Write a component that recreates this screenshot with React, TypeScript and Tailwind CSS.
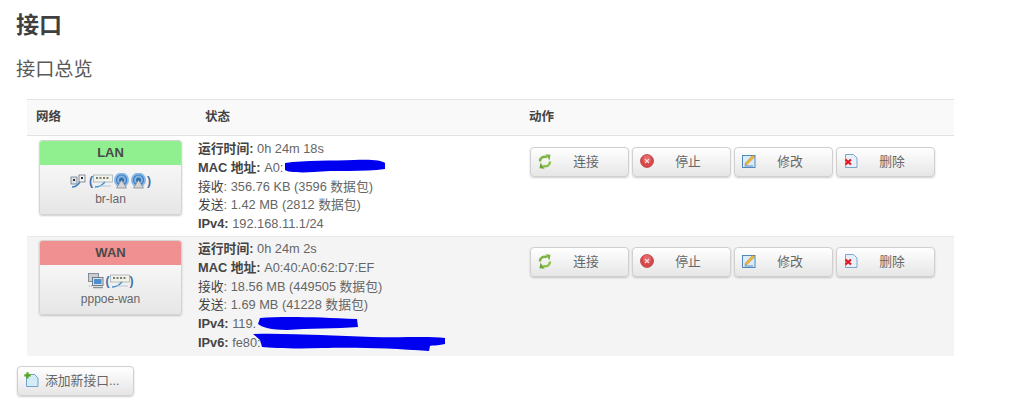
import React from 'react';

const font = { fontFamily: '"Liberation Sans", "Noto Sans CJK SC", sans-serif' };

const RefreshIcon = () => (
  <svg width="14" height="15" viewBox="0 0 14 15">
    <path d="M2 7.500C1.800 4 5 1.800 8.800 3.200" fill="none" stroke="#7cb342" strokeWidth="2.400" />
    <path d="M7.500 .3L12.500 .8L11.500 6.500Z" fill="#7cb342" />
    <path d="M12 7.500C12.200 11 9 13.200 5.200 11.800" fill="none" stroke="#8bc34a" strokeWidth="2.400" />
    <path d="M6.500 14.700L1.500 14.200L2.500 8.500Z" fill="#6aa536" />
  </svg>
);

const StopIcon = () => (
  <svg width="14" height="14" viewBox="0 0 14 14">
    <circle cx="7" cy="7" r="6.500" fill="#d8474a" stroke="#b23a3a" strokeWidth="0.7" />
    <circle cx="7" cy="5" r="4" fill="#ef8a88" opacity="0.5" />
    <path d="M5 5L9 9M9 5L5 9" stroke="#fbdede" strokeWidth="1.100" />
  </svg>
);

const EditIcon = () => (
  <svg width="14" height="14" viewBox="0 0 14 14">
    <rect x="0.500" y="1.500" width="12.500" height="12" fill="#dcebf8" stroke="#4f86bb" />
    <path d="M3 11L3.500 9L10.500 1.500L12.500 3L5 10.500Z" fill="#f0b93a" stroke="#a8761a" strokeWidth="0.5" />
    <path d="M2.500 12H11" stroke="#3d6fa5" strokeWidth="0.8" />
  </svg>
);

const DeleteIcon = () => (
  <svg width="14" height="14" viewBox="0 0 14 14">
    <path d="M1.500 .5H9.500L13 4V13.500H1.500Z" fill="#e6f0fa" stroke="#7fa5ca" />
    <path d="M1.500 5.500L7 10.500M7 5.500L1.500 10.500" stroke="#e0161c" strokeWidth="2.200" />
  </svg>
);

const AddIcon = () => (
  <svg width="15" height="15" viewBox="0 0 15 15">
    <path d="M2.500 2.500H10.500L14 6V14.500H2.500Z" fill="#d5ebf8" stroke="#6fa3c9" />
    <path d="M3.500 .2V6.500M.3 3.300H6.700" stroke="#56a821" strokeWidth="2.200" />
  </svg>
);

const SwitchIcon = () => (
  <svg width="16" height="14" viewBox="0 0 16 14">
    <rect x="1" y="3" width="6" height="7" fill="#dfe3e8" stroke="#59677a" strokeWidth="0.7" />
    <rect x="9" y="1" width="6" height="7" fill="#eef0f2" stroke="#59677a" strokeWidth="0.7" />
    <rect x="3" y="5" width="2" height="2" fill="#333" />
    <rect x="11" y="3" width="2" height="2" fill="#333" />
    <path d="M2 13C6 13 8 11 10 8" fill="none" stroke="#3f7fc0" strokeWidth="1.400" />
  </svg>
);

const EthernetIcon = () => (
  <svg width="20" height="14" viewBox="0 0 20 14">
    <rect x="0.500" y="1" width="19" height="7" fill="#f2f3e6" stroke="#8a9aa8" strokeWidth="0.6" />
    <path d="M3 4H5M6.500 4H8.500M10 4H12M13.500 4H15.500" stroke="#54575a" strokeWidth="1.600" />
    <path d="M2 13C7 13 9 11 12 8" fill="none" stroke="#3f8fd0" strokeWidth="1.300" />
    <path d="M6 12H18" stroke="#b6c8d8" strokeWidth="1" />
  </svg>
);

const WifiIcon = () => (
  <svg width="17" height="16" viewBox="0 0 17 16">
    <circle cx="8.500" cy="7" r="7.500" fill="#86b6e4" />
    <circle cx="8.500" cy="7" r="5" fill="none" stroke="#3f7fbf" strokeWidth="1.200" />
    <circle cx="8.500" cy="7" r="2.500" fill="#2f6fae" />
    <path d="M8.500 7L3.500 15H13.500Z" fill="#d4d6d8" stroke="#7b8085" strokeWidth="0.7" />
  </svg>
);

const ComputersIcon = () => (
  <svg width="16" height="16" viewBox="0 0 16 16">
    <rect x="0.500" y="0.500" width="10" height="8" fill="#c9ced3" stroke="#6f7a85" strokeWidth="0.8" />
    <rect x="4.500" y="4.500" width="10.500" height="8" fill="#dbe3ea" stroke="#56616d" strokeWidth="0.8" />
    <rect x="6" y="6" width="7.500" height="5" fill="#4a90d0" />
    <path d="M5 14.500H15" stroke="#8a939c" strokeWidth="1.500" />
    <path d="M1 13H4" stroke="#7fa5ca" strokeWidth="1" strokeDasharray="1 1" />
  </svg>
);

const Paren = ({ children }: { children: React.ReactNode }) => (
  <span className="text-[12px] font-bold leading-none text-[#3e6ea5]">{children}</span>
);

const NetBadge = ({ title, color, name, icons }: { title: string; color: string; name: string; icons: React.ReactNode }) => (
  <div className="w-[143px] h-[75px] rounded-[3px] border border-[#d4d4d4] overflow-hidden shadow-[0_1px_2px_rgba(0,0,0,0.2)] bg-gradient-to-b from-white to-[#e6e6e6]">
    <div className={`h-[24px] flex items-center justify-center text-[13px] font-bold text-[#4a4a4a] ${color}`}>{title}</div>
    <div className="flex flex-col items-center pt-[8px]">
      <div className="h-[16px] flex items-center">{icons}</div>
      <div className="text-[12px] leading-[18px] mt-[1px] text-[#666]">{name}</div>
    </div>
  </div>
);

const ActionButton = ({ icon, label }: { icon: React.ReactNode; label: string }) => (
  <div className="relative w-[99px] h-[30px] flex items-center justify-center pl-[13px] rounded-[4px] border border-[#d0d0d0] bg-gradient-to-b from-white to-[#e6e6e6] shadow-[0_1px_2px_rgba(0,0,0,0.2)] text-[12.800px] text-[#666]">
    <span className="absolute left-[7px] top-[6px] flex">{icon}</span>
    {label}
  </div>
);

const Actions = () => (
  <div className="flex gap-[3px]">
    <ActionButton icon={<RefreshIcon />} label="连接" />
    <ActionButton icon={<StopIcon />} label="停止" />
    <ActionButton icon={<EditIcon />} label="修改" />
    <ActionButton icon={<DeleteIcon />} label="删除" />
  </div>
);

const Stat = ({ label, bold, value }: { label: string; bold?: boolean; value: string }) => (
  <div className="h-[18.800px] leading-[18.800px] whitespace-nowrap">
    <span className={bold ? 'font-bold text-[#444]' : 'text-[#444]'}>{label}</span>
    {bold ? <span className="font-bold text-[#444]">:</span> : ':'} {value}
  </div>
);

const Scribble = ({ className, width, height, d }: { className: string; width: number; height: number; d: string }) => (
  <svg className={`absolute ${className}`} width={width} height={height} viewBox={`0 0 ${width} ${height}`}>
    <path d={d} fill="#0000f0" />
  </svg>
);

export default function App() {
  return (
    <div className="w-[1024px] h-[412px] bg-white overflow-hidden text-[#666] pl-[16px]" style={font}>
      <h1 className="text-[23px] leading-[30px] pt-[10px] font-bold text-[#404040]">接口</h1>
      <h2 className="text-[19.200px] leading-[30px] mt-[15px] text-[#595959]">接口总览</h2>

      <div className="ml-[11px] mt-[14px] w-[927px] text-[12.800px]">
        <div className="grid grid-cols-[178px_324px_1fr] h-[37px] items-center bg-[#f9f9f9] border-y border-[#e2e2e2] font-bold text-[#444] text-[12.500px]">
          <div className="pl-[9px]">网络</div>
          <div>状态</div>
          <div>动作</div>
        </div>

        <div className="grid grid-cols-[171px_332px_1fr] h-[100px] bg-white">
          <div className="pl-[12px] pt-[4px]">
            <NetBadge
              title="LAN"
              color="bg-[#90f090]"
              name="br-lan"
              icons={
                <>
                  <SwitchIcon />
                  <span className="w-[3px]" />
                  <Paren>(</Paren>
                  <EthernetIcon />
                  <WifiIcon />
                  <WifiIcon />
                  <Paren>)</Paren>
                </>
              }
            />
          </div>
          <div className="relative pt-[4px]">
            <Stat label="运行时间" bold value="0h 24m 18s" />
            <Stat label="MAC 地址" bold value="A0:" />
            <Stat label="接收" value="356.76 KB (3596 数据包)" />
            <Stat label="发送" value="1.42 MB (2812 数据包)" />
            <Stat label="IPv4" bold value="192.168.11.1/24" />
            <Scribble
              className="left-[86px] top-[23px]"
              width={102}
              height={14}
              d="M1 4C20 1 50 2 70 1C85 0 98 1 101 4L101 10C80 13 50 11 30 13C15 14 3 13 1 11Z"
            />
          </div>
          <div className="pt-[11px]">
            <Actions />
          </div>
        </div>

        <div className="grid grid-cols-[171px_332px_1fr] h-[120px] bg-[#f4f4f4] border-t border-[#e8e8e8]">
          <div className="pl-[12px] pt-[3px]">
            <NetBadge
              title="WAN"
              color="bg-[#f09090]"
              name="pppoe-wan"
              icons={
                <>
                  <ComputersIcon />
                  <span className="w-[2px]" />
                  <Paren>(</Paren>
                  <EthernetIcon />
                  <Paren>)</Paren>
                </>
              }
            />
          </div>
          <div className="relative pt-[3px]">
            <Stat label="运行时间" bold value="0h 24m 2s" />
            <Stat label="MAC 地址" bold value="A0:40:A0:62:D7:EF" />
            <Stat label="接收" value="18.56 MB (449505 数据包)" />
            <Stat label="发送" value="1.69 MB (41228 数据包)" />
            <Stat label="IPv4" bold value="119." />
            <Stat label="IPv6" bold value="fe80:" />
            <Scribble
              className="left-[59px] top-[78px]"
              width={102}
              height={16}
              d="M3 3C25 1 60 2 100 4L101 12C80 14 50 13 30 15C15 15 4 12 1 9Z"
            />
            <Scribble
              className="left-[54px] top-[96px]"
              width={194}
              height={19}
              d="M1 1C40 0 80 3 120 4C150 5 175 3 193 5L193 11C185 13 180 12 178 13L177 18C140 15 100 14 70 15C45 16 20 15 10 14L8 7Z"
            />
          </div>
          <div className="pt-[10px]">
            <Actions />
          </div>
        </div>
      </div>

      <div className="relative ml-[1px] mt-[10px] w-[117px] h-[30px] flex items-center pl-[27px] rounded-[4px] border border-[#d0d0d0] bg-gradient-to-b from-white to-[#e6e6e6] shadow-[0_1px_2px_rgba(0,0,0,0.2)] text-[12.800px] text-[#666]">
        <span className="absolute left-[6px] top-[5px] flex">
          <AddIcon />
        </span>
        添加新接口...
      </div>
    </div>
  );
}
